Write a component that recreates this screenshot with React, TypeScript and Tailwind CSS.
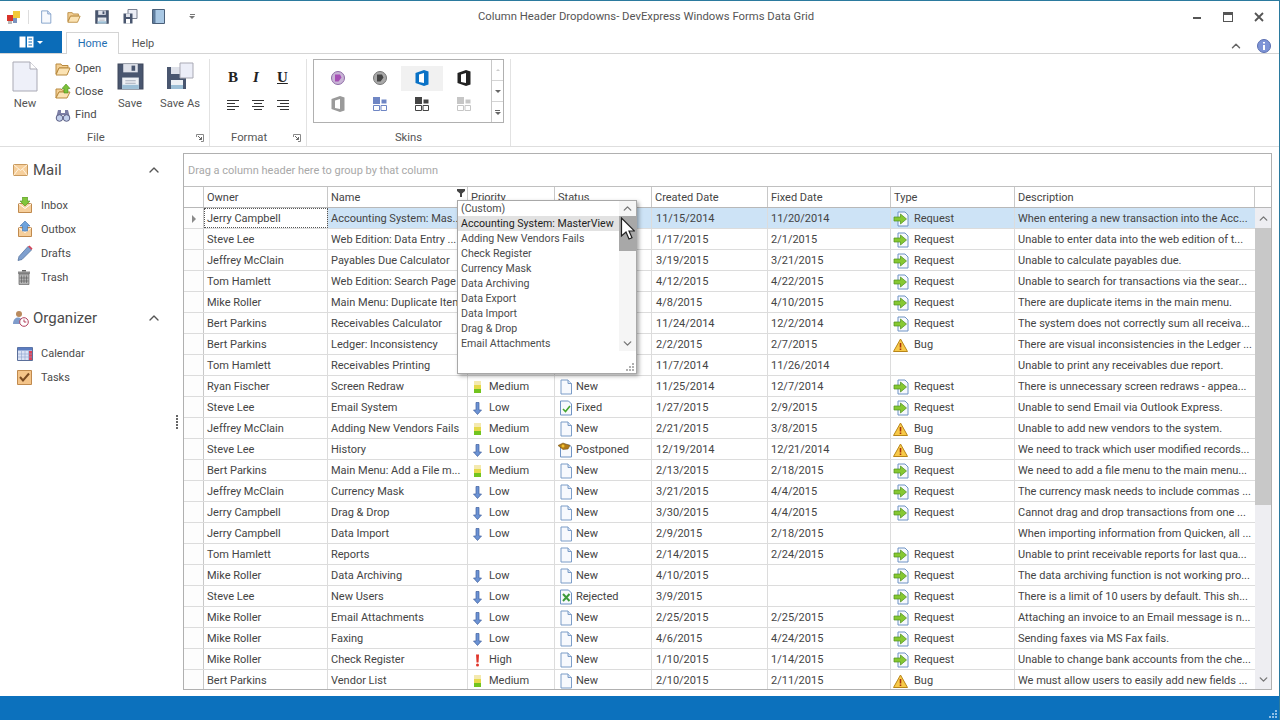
import React from 'react';
import { ChevronUp, ChevronDown } from 'lucide-react';

type Ic = { s?: number };

const Doc = ({ s = 16 }: Ic) => (
  <svg width={s} height={s} viewBox="0 0 16 16"><path d="M3 1h7l3.500 3.500V15H3z" fill="#f7f9fd" stroke="#7b9cc7" /><path d="M10 1v3.500h3.500" fill="#dbe6f5" stroke="#7b9cc7" /></svg>
);
const BigDoc = () => (
  <svg width="26" height="31" viewBox="0 0 26 31"><path d="M1 1h17l7 7v22H1z" fill="#eef0f9" stroke="#a9a9b4" /><path d="M18 1v7h7" fill="#fff" stroke="#a9a9b4" /></svg>
);
const Folder = () => (
  <svg width="16" height="14" viewBox="0 0 16 14"><path d="M1 12V2h5l1 1.500h6V6H4z" fill="#f3cf94" stroke="#b98a3e" /><path d="M1 13l3-7h11l-3 7z" fill="#fbe3b4" stroke="#b98a3e" /></svg>
);
const FolderUp = () => (
  <svg width="16" height="15" viewBox="0 0 16 15"><path d="M1 14V5h5l1 1h2v2H4z" fill="#f3cf94" stroke="#b98a3e" /><path d="M1 14l3-6h11l-3 6z" fill="#fbe3b4" stroke="#b98a3e" /><path d="M11 0l4 4.500h-2V9H9V4.500H7z" fill="#7cc13a" stroke="#4f8f1c" strokeWidth=".6" /></svg>
);
const Binoculars = () => (
  <svg width="16" height="14" viewBox="0 0 16 14"><path d="M3 2h3v3h4V2h3l2 8H9V7H7v3H1z" fill="#7d7fa6" /><circle cx="4.500" cy="10" r="3.300" fill="#c3d0ec" stroke="#5c5f84" /><circle cx="11.500" cy="10" r="3.300" fill="#c3d0ec" stroke="#5c5f84" /></svg>
);
const Floppy = ({ s = 16 }: Ic) => (
  <svg width={s} height={s} viewBox="0 0 26 26"><path d="M1 1h24v24H1z" fill="#49566f" stroke="#3b4559" /><path d="M6 1h14v8H6z" fill="#dfe2ea" /><path d="M14 2.500h3.500v5H14z" fill="#49566f" /><path d="M5 14h16v11H5z" fill="#eef1f5" /><path d="M5 21h16v4H5z" fill="#9dbfd6" /><path d="M8 17h10M8 19.500h10" stroke="#a7adba" /></svg>
);
const SaveAsIcon = () => (
  <svg width="28" height="28" viewBox="0 0 28 28"><path d="M1 5h19v22H1z" fill="#49566f" /><path d="M5 5h10v7H5z" fill="#dfe2ea" /><path d="M5 18h12v9H5z" fill="#eef1f5" /><path d="M5 23h12v4H5z" fill="#9dbfd6" /><path d="M14 1h13v15H14z" fill="#eceef8" stroke="#a9a9b4" /></svg>
);
const Logo = () => (
  <svg width="14" height="14" viewBox="0 0 14 14"><path d="M0 5h6v6H0z" fill="#d8332a" /><path d="M6 1h7v7H6z" fill="#f1c93b" /><path d="M6 8h4v5H6z" fill="#7b93bd" /><path d="M1 11h4v3H1z" fill="#b9b9b9" /></svg>
);
const Book = () => (
  <svg width="13" height="15" viewBox="0 0 13 15"><path d="M.5.500h12v14H.5z" fill="#a9c8e4" stroke="#4a5f78" /><path d="M1 1h2.500v13H1z" fill="#5e7d9e" /></svg>
);
const SmallDocBack = () => (
  <svg width="15" height="15" viewBox="0 0 15 15"><path d="M5 .5h9v9H5z" fill="#eceef6" stroke="#7a8090" /><path d="M.5 4.500h9v10h-9z" fill="#49566f" /><path d="M3 10h4v4.500H3z" fill="#fff" /><path d="M3 4.500h4V8H3z" fill="#dfe2ea" /></svg>
);

const Align = ({ rows }: { rows: string[] }) => (
  <svg width="12" height="10" viewBox="0 0 12 10">{rows.map((d, i) => <path key={i} d={d} stroke="#333" />)}</svg>
);

const SkinCircle = ({ c }: { c: string }) => (
  <svg width="16" height="16" viewBox="0 0 16 16"><circle cx="8" cy="8" r="6.500" fill={c === 'p' ? '#c9b5d6' : '#a8a8a8'} stroke={c === 'p' ? '#8e6da6' : '#777'} /><path d="M5 4.500h5l1.500 3-3 4H5z" fill={c === 'p' ? '#a64fb5' : '#444'} /></svg>
);
const Office = ({ c }: { c: string }) => (
  <svg width="16" height="18" viewBox="0 0 16 18"><path d="M1.500 4L10 1l4.500 1.500v13L10 17l-8.500-3z" fill={c} /><path d="M5 5.500l5-1.500v10l-5-1z" fill="#fff" /></svg>
);
const Tiles = ({ a, b }: { a: string; b: string }) => (
  <svg width="14" height="14" viewBox="0 0 14 14"><path d="M0 0h7v7H0z" fill={a} /><path d="M8.500 2.500h5v4h-5z" fill={b} /><path d="M.5 8.500h6v5h-6z" fill="none" stroke={a} /><path d="M8 8.500h5.500v5H8z" fill="none" stroke={a} /></svg>
);

const MailIcon = () => (
  <svg width="15" height="12" viewBox="0 0 15 12"><path d="M.5.500h14v11H.5z" fill="#f6cf9c" stroke="#c99a5e" /><path d="M.5.500l7 6 7-6M.5 11.500l5-6.500M14.500 11.500l-5-6.500" fill="none" stroke="#fff4e0" /></svg>
);
const Inbox = () => (
  <svg width="16" height="16" viewBox="0 0 16 16"><path d="M1.500 6.500h13v9h-13z" fill="#f6cf9c" stroke="#c08a4e" /><path d="M1.500 6.500l6.500 5 6.500-5" fill="none" stroke="#fff" /><path d="M5.500 0h5v4H13l-5 5-5-5h2.500z" fill="#82c63c" stroke="#4f8f1c" strokeWidth=".6" /></svg>
);
const Outbox = () => (
  <svg width="16" height="16" viewBox="0 0 16 16"><path d="M1.500 6.500h13v9h-13z" fill="#f6cf9c" stroke="#c08a4e" /><path d="M1.500 6.500l6.500 5 6.500-5" fill="none" stroke="#fff" /><path d="M8 0l5 5h-2.500v5h-5V5H3z" fill="#6ea3dc" stroke="#3f6fa8" strokeWidth=".6" /></svg>
);
const Pencil = () => (
  <svg width="16" height="16" viewBox="0 0 16 16"><path d="M11 1.500l3.500 3.500L5 14.500 1 15.500 2 11.500z" fill="#7fa0cf" stroke="#4d6b98" strokeWidth=".7" /><path d="M11 1.500l1.500-1 3 3-1 1.500z" fill="#d2455a" /></svg>
);
const Trash = () => (
  <svg width="14" height="16" viewBox="0 0 14 16"><path d="M1 2.500h12V5H1z" fill="#8b8b8b" /><path d="M5 1h4v1.500H5z" fill="#666" /><path d="M2 5h10v10.500H2z" fill="#b4b4b4" stroke="#666" strokeWidth=".7" /><path d="M4.500 6.500v7.500M7 6.500v7.500M9.500 6.500v7.500M2.500 9h9M2.500 12h9" stroke="#555" strokeWidth=".6" /></svg>
);
const OrganizerIcon = () => (
  <svg width="16" height="17" viewBox="0 0 16 17"><circle cx="6" cy="4" r="3" fill="#b98a5e" /><path d="M0 14c0-5 3-6.500 5-6.500S10 9 10 14z" fill="#7f9ccb" /><circle cx="11" cy="12" r="4.300" fill="#fff" stroke="#b3405d" /><path d="M11 9.500V12h2.300" fill="none" stroke="#b3405d" /></svg>
);
const Calendar = () => (
  <svg width="16" height="15" viewBox="0 0 16 15"><path d="M.5 1.500h15v13H.5z" fill="#dbe3f5" stroke="#5b6f9a" /><path d="M1 1.500h14v3H1z" fill="#5b7cc0" /><path d="M12 5h3v9h-3z" fill="#d9435a" /><path d="M4.500 5v9M8 5v9M11.500 5v9M1 8h14M1 11h14" stroke="#8ea3cc" strokeWidth=".6" /></svg>
);
const Tasks = () => (
  <svg width="15" height="15" viewBox="0 0 15 15"><path d="M.5.500h14v14H.5z" fill="#f4c489" stroke="#c08a4e" /><path d="M3 7l3 3.500L12 3.500" fill="none" stroke="#7a4a20" strokeWidth="2" /></svg>
);

const PrioMedium = () => (
  <svg width="7" height="12" viewBox="0 0 7 12"><path d="M0 0h7v4H0z" fill="#f4e9b0" /><path d="M0 4h7v4H0z" fill="#e6d94a" /><path d="M0 8h7v4H0z" fill="#72c41f" /></svg>
);
const PrioLow = () => (
  <svg width="9" height="13" viewBox="0 0 9 13"><path d="M3 .500h3V8h2.500L4.500 12.500.5 8H3z" fill="#6c93d4" stroke="#3f5f9e" strokeWidth=".7" /></svg>
);
const PrioHigh = () => (
  <svg width="7" height="13" viewBox="0 0 7 13"><path d="M2 .500h3l-.5 8h-2z" fill="#e0352b" /><circle cx="3.500" cy="11" r="1.500" fill="#e0352b" /></svg>
);
const StatusFixed = () => (
  <svg width="16" height="16" viewBox="0 0 16 16"><path d="M2.500 1h8l3 3v11h-11z" fill="#f7f9fd" stroke="#6f93c4" /><path d="M5 9l2.500 2.500L12 6" fill="none" stroke="#43a52c" strokeWidth="1.600" /></svg>
);
const StatusRejected = () => (
  <svg width="16" height="16" viewBox="0 0 16 16"><path d="M2.500 1h8l3 3v11h-11z" fill="#f7f9fd" stroke="#6f93c4" /><path d="M5 5l6.500 7M11.500 5L5 12" fill="none" stroke="#3c9a3a" strokeWidth="2" /></svg>
);
const StatusPostponed = () => (
  <svg width="16" height="16" viewBox="0 0 16 16"><path d="M2.500 3h9l2 2v10h-11z" fill="#f7f9fd" stroke="#6f93c4" /><path d="M0 3.500L5 1l7 2.500-2 3.500-5 .5z" fill="#b07a18" stroke="#6d4a0c" strokeWidth=".5" /><circle cx="5" cy="4" r="1.500" fill="#f2c230" /></svg>
);
const TypeRequest = () => (
  <svg width="17" height="16" viewBox="0 0 17 16"><path d="M5 1h7l3 3v11H5z" fill="#f7f9fd" stroke="#6f93c4" /><path d="M1 6h6.500V3l6 5-6 5v-3H1z" fill="#86c832" stroke="#4f8f1c" strokeWidth=".7" /></svg>
);
const TypeBug = () => (
  <svg width="15" height="14" viewBox="0 0 15 14"><path d="M7.500 1L14.500 13.500H.5z" fill="#f7c948" stroke="#b8861a" /><path d="M7.500 5v4.500M7.500 10.500v1.500" stroke="#a8320f" strokeWidth="1.600" /></svg>
);

const prio: Record<string, React.ReactNode> = { Medium: <PrioMedium />, Low: <PrioLow />, High: <PrioHigh /> };
const status: Record<string, React.ReactNode> = {
  New: <Doc />, Fixed: <StatusFixed />, Postponed: <StatusPostponed />, Rejected: <StatusRejected />,
};
const types: Record<string, React.ReactNode> = { Request: <TypeRequest />, Bug: <TypeBug /> };

// priority and status of the first eight rows sit behind the filter dropdown
const rows = [
  ['Jerry Campbell', 'Accounting System: Mas...', '', '', '11/15/2014', '11/20/2014', 'Request', 'When entering a new transaction into the Acc...'],
  ['Steve Lee', 'Web Edition: Data Entry ...', '', '', '1/17/2015', '2/1/2015', 'Request', 'Unable to enter data into the web edition of t...'],
  ['Jeffrey McClain', 'Payables Due Calculator', '', '', '3/19/2015', '3/21/2015', 'Request', 'Unable to calculate payables due.'],
  ['Tom Hamlett', 'Web Edition: Search Page', '', '', '4/12/2015', '4/22/2015', 'Request', 'Unable to search for transactions via the sear...'],
  ['Mike Roller', 'Main Menu: Duplicate Items', '', '', '4/8/2015', '4/10/2015', 'Request', 'There are duplicate items in the main menu.'],
  ['Bert Parkins', 'Receivables Calculator', '', '', '11/24/2014', '12/2/2014', 'Request', 'The system does not correctly sum all receiva...'],
  ['Bert Parkins', 'Ledger: Inconsistency', '', '', '2/2/2015', '2/7/2015', 'Bug', 'There are visual inconsistencies in the Ledger ...'],
  ['Tom Hamlett', 'Receivables Printing', '', '', '11/7/2014', '11/26/2014', '', 'Unable to print any receivables due report.'],
  ['Ryan Fischer', 'Screen Redraw', 'Medium', 'New', '11/25/2014', '12/7/2014', 'Request', 'There is unnecessary screen redraws - appea...'],
  ['Steve Lee', 'Email System', 'Low', 'Fixed', '1/27/2015', '2/9/2015', 'Request', 'Unable to send Email via Outlook Express.'],
  ['Jeffrey McClain', 'Adding New Vendors Fails', 'Medium', 'New', '2/21/2015', '3/8/2015', 'Bug', 'Unable to add new vendors to the system.'],
  ['Steve Lee', 'History', 'Low', 'Postponed', '12/19/2014', '12/21/2014', 'Bug', 'We need to track which user modified records...'],
  ['Bert Parkins', 'Main Menu: Add a File m...', 'Medium', 'New', '2/13/2015', '2/18/2015', 'Request', 'We need to add a file menu to the main menu...'],
  ['Jeffrey McClain', 'Currency Mask', 'Low', 'New', '3/21/2015', '4/4/2015', 'Request', 'The currency mask needs to include commas ...'],
  ['Jerry Campbell', 'Drag & Drop', 'Low', 'New', '3/30/2015', '4/4/2015', 'Request', 'Cannot drag and drop transactions from one ...'],
  ['Jerry Campbell', 'Data Import', 'Low', 'New', '2/9/2015', '2/18/2015', '', 'When importing information from Quicken, all ...'],
  ['Tom Hamlett', 'Reports', '', 'New', '2/14/2015', '2/24/2015', 'Request', 'Unable to print receivable reports for last qua...'],
  ['Mike Roller', 'Data Archiving', 'Low', 'New', '4/10/2015', '', 'Request', 'The data archiving function is not working pro...'],
  ['Steve Lee', 'New Users', 'Low', 'Rejected', '3/9/2015', '', 'Request', 'There is a limit of 10 users by default. This sh...'],
  ['Mike Roller', 'Email Attachments', 'Low', 'New', '2/25/2015', '2/25/2015', 'Request', 'Attaching an invoice to an Email message is n...'],
  ['Mike Roller', 'Faxing', 'Low', 'New', '4/6/2015', '4/24/2015', 'Request', 'Sending faxes via MS Fax fails.'],
  ['Mike Roller', 'Check Register', 'High', 'New', '1/10/2015', '1/14/2015', 'Request', 'Unable to change bank accounts from the che...'],
  ['Bert Parkins', 'Vendor List', 'Medium', 'New', '2/10/2015', '2/11/2015', 'Bug', 'We must allow users to easily add new fields ...'],
];

const columns = [
  { title: 'Owner', w: 'w-[124px]' },
  { title: 'Name', w: 'w-[140px]' },
  { title: 'Priority', w: 'w-[87px]' },
  { title: 'Status', w: 'w-[97px]' },
  { title: 'Created Date', w: 'w-[116px]' },
  { title: 'Fixed Date', w: 'w-[123px]' },
  { title: 'Type', w: 'w-[124px]' },
  { title: 'Description', w: 'w-[240px]' },
];

const popupItems = ['(Custom)', 'Accounting System: MasterView', 'Adding New Vendors Fails', 'Check Register', 'Currency Mask', 'Data Archiving', 'Data Export', 'Data Import', 'Drag & Drop', 'Email Attachments'];

function Launcher() {
  return (
    <svg className="ml-auto" width="8" height="8" viewBox="0 0 8 8"><path d="M.5 3V.5H7.500V7.500H5" fill="none" stroke="#888" /><path d="M2 2l3.500 3.500M5.500 3v2.500H3" fill="none" stroke="#666" /></svg>
  );
}

function NavGroup({ icon, title, items }: { icon: React.ReactNode; title: string; items: [React.ReactNode, string][] }) {
  return (
    <div className="mb-[17px]">
      <div className="flex h-[24px] items-center pl-[13px] pr-[21px]">
        <span className="flex w-[20px] shrink-0">{icon}</span>
        <span className="text-[15px] text-[#4b4b4b]">{title}</span>
        <ChevronUp className="ml-auto w-4 h-4 text-[#555]" strokeWidth={2} />
      </div>
      <div className="mt-[11px] flex flex-col">
        {items.map(([ic, label]) => (
          <div key={label} className="flex h-[24px] items-center pl-[17px] text-[#4b4b4b]">
            <span className="flex w-[24px] shrink-0">{ic}</span>
            <span className="pt-[2px]">{label}</span>
          </div>
        ))}
      </div>
    </div>
  );
}

function GridRow({ row, first }: { row: string[]; first: boolean }) {
  const [owner, name, p, s, created, fixed, t, desc] = row;
  return (
    <div className={`flex h-[21px] border-b border-[#dcdcdc] ${first ? 'bg-[#cde3f6]' : 'bg-white'}`}>
      <div className="flex w-[20px] shrink-0 items-center justify-center border-r border-[#c8c8c8] bg-[#fdfdfd] pt-[2px]">
        {first && <div className="h-0 w-0 border-y-[4px] border-l-[4px] border-y-transparent border-l-[#8a8a8a]" />}
      </div>
      <div className={`flex w-[124px] shrink-0 items-center border-r border-[#dcdcdc] pl-[3px] pt-[2px] ${first ? 'bg-white outline-1 -outline-offset-1 outline-dotted outline-[#555]' : ''}`}>{owner}</div>
      <div className="flex w-[140px] shrink-0 items-center overflow-hidden whitespace-nowrap border-r border-[#dcdcdc] pl-[3px] pt-[2px]">{name}</div>
      <div className="flex w-[87px] shrink-0 items-center border-r border-[#dcdcdc] pt-[2px]">
        {p && <span className="flex w-[19px] shrink-0 justify-center">{prio[p]}</span>}
        {p && <span className="pl-[2px]">{p}</span>}
      </div>
      <div className="flex w-[97px] shrink-0 items-center border-r border-[#dcdcdc] pl-[3px] pt-[2px]">
        {s && <span className="flex w-[18px] shrink-0">{status[s]}</span>}
        {s && <span>{s}</span>}
      </div>
      <div className="flex w-[116px] shrink-0 items-center border-r border-[#dcdcdc] pl-[4px] pt-[2px]">{created}</div>
      <div className="flex w-[123px] shrink-0 items-center border-r border-[#dcdcdc] pl-[3px] pt-[2px]">{fixed}</div>
      <div className="flex w-[124px] shrink-0 items-center border-r border-[#dcdcdc] pl-[2px] pt-[2px]">
        {t && <span className="flex w-[19px] shrink-0">{types[t]}</span>}
        {t && <span className="pl-[2px]">{t}</span>}
      </div>
      <div className="flex w-[240px] shrink-0 items-center overflow-hidden whitespace-nowrap pl-[3px] pt-[2px]">{desc}</div>
    </div>
  );
}

export default function App() {
  return (
    <div className="relative flex h-[720px] w-[1280px] flex-col overflow-hidden border-r border-[#2b7a9e] bg-white font-['Roboto',sans-serif] text-[11px] leading-[14px] text-[#444]">
      {/* title bar */}
      <div className="flex h-[32px] shrink-0 items-center border-t border-[#2b7a9e] pl-[7px]">
        <Logo />
        <div className="ml-[7px] h-[14px] w-px bg-[#ddd]" />
        <div className="ml-[10px] flex w-[14px]"><Doc /></div>
        <div className="ml-[14px] flex w-[14px]"><Folder /></div>
        <div className="ml-[14px] flex"><Floppy s={14} /></div>
        <div className="ml-[14px] flex"><SmallDocBack /></div>
        <div className="ml-[14px] flex"><Book /></div>
        <div className="ml-[24px] flex flex-col items-center gap-[1px]">
          <div className="h-px w-[5px] bg-[#777]" />
          <div className="h-0 w-0 border-x-[3px] border-t-[3px] border-x-transparent border-t-[#777]" />
        </div>
        <div className="ml-[283px] w-[320px] whitespace-nowrap text-center text-[11.300px] text-[#555]">Column Header Dropdowns- DevExpress Windows Forms Data Grid</div>
        <div className="ml-auto flex items-center pr-[15px]">
          <div className="mt-[3px] h-[2px] w-[8px] bg-[#555]" />
          <div className="ml-[22px] h-[10px] w-[10px] border border-t-[3px] border-[#555]" />
          <svg className="ml-[21px]" width="10" height="10" viewBox="0 0 10 10"><path d="M1 1l8 8M9 1l-8 8" stroke="#555" strokeWidth="1.800" /></svg>
        </div>
      </div>
      {/* tabs */}
      <div className="flex h-[22px] shrink-0 items-end border-b border-[#d4d4d4]">
        <div className="flex h-[22px] w-[62px] items-center justify-center gap-[3px] bg-[#0b6cb8]">
          <svg width="15" height="12" viewBox="0 0 15 12"><path d="M.5.500h6v11h-6z" fill="#fff" /><path d="M8 .500h6.500v11H8z" fill="#fff" /><path d="M9.500 3h3.500M9.500 6h3.500M9.500 9h3.500" stroke="#0b6cb8" /></svg>
          <div className="h-0 w-0 border-x-[3px] border-t-[3px] border-x-transparent border-t-white" />
        </div>
        <div className="relative -mb-px ml-[4px] flex h-[22px] w-[53px] items-center justify-center border-x border-t border-[#d4d4d4] bg-white text-[#1f6fb2]">Home</div>
        <div className="flex h-[21px] w-[48px] items-center justify-center pt-[2px] text-[#555]">Help</div>
        <div className="ml-auto flex items-center pr-[8px]">
          <ChevronUp className="h-[14px] w-[14px] text-[#666]" strokeWidth={2.500} />
          <svg className="ml-[14px]" width="14" height="14" viewBox="0 0 14 14"><circle cx="7" cy="7" r="6.500" fill="#7e94d6" stroke="#5b6fb0" /><path d="M7 3v1.500M7 6v5" stroke="#fff" strokeWidth="2" /></svg>
        </div>
      </div>
      {/* ribbon */}
      <div className="flex h-[93px] shrink-0 border-b border-[#dedede] pt-[5px] text-[11.300px] text-[#555]">
        <div className="flex w-[210px] shrink-0 flex-col border-r border-[#e2e2e2]">
          <div className="flex h-[72px]">
            <div className="ml-[12px] flex w-[26px] flex-col items-center">
              <div className="flex h-[34px] items-center"><BigDoc /></div>
              <span className="mt-[4px]">New</span>
            </div>
            <div className="ml-[17px] flex w-[62px] flex-col -mt-[2px] text-[#4b4b4b]">
              <div className="flex h-[23px] items-center gap-[4px]"><Folder /><span>Open</span></div>
              <div className="flex h-[23px] items-center gap-[4px]"><FolderUp /><span>Close</span></div>
              <div className="flex h-[23px] items-center gap-[4px]"><Binoculars /><span>Find</span></div>
            </div>
            <div className="flex w-[26px] flex-col items-center">
              <div className="flex h-[34px] items-center"><Floppy s={27} /></div>
              <span className="mt-[4px]">Save</span>
            </div>
            <div className="ml-[23px] flex w-[28px] flex-col items-center">
              <div className="flex h-[34px] items-center"><SaveAsIcon /></div>
              <span className="mt-[4px] whitespace-nowrap">Save As</span>
            </div>
          </div>
          <div className="flex h-[14px] items-center pl-[87px] pr-[5px]">
            <span>File</span>
            <Launcher />
          </div>
        </div>
        <div className="flex w-[97px] shrink-0 flex-col border-r border-[#e2e2e2]">
          <div className="flex h-[72px] flex-col pt-[9px]">
            <div className="flex h-[18px] items-center pl-[18px] font-['Liberation_Serif',serif] text-[15px] text-[#222]">
              <span className="w-[25px] font-bold">B</span>
              <span className="w-[24px] font-bold italic">I</span>
              <span className="font-bold underline">U</span>
            </div>
            <div className="mt-[14px] flex items-center pl-[17px]">
              <span className="flex w-[25px]"><Align rows={['M0 .500h12', 'M0 3.500h8', 'M0 6.500h12', 'M0 9.500h8']} /></span>
              <span className="flex w-[25px]"><Align rows={['M0 .500h12', 'M2 3.500h8', 'M0 6.500h12', 'M2 9.500h8']} /></span>
              <Align rows={['M0 .500h12', 'M3 3.500h9', 'M0 6.500h12', 'M3 9.500h9']} />
            </div>
          </div>
          <div className="flex h-[14px] items-center pl-[21px] pr-[5px]">
            <span>Format</span>
            <Launcher />
          </div>
        </div>
        <div className="flex w-[204px] shrink-0 flex-col border-r border-[#e2e2e2] px-[6px]">
          <div className="flex h-[64px] w-[191px] border border-[#b0b0b0]">
            <div className="grid flex-1 grid-cols-[repeat(4,42px)] grid-rows-[26px_26px] place-items-center content-start pl-[3px] pt-[5px]">
              <SkinCircle c="p" />
              <SkinCircle c="g" />
              <div className="flex h-[25px] w-[42px] items-center justify-center bg-[#f1f1f1]"><Office c="#0a72c6" /></div>
              <Office c="#222" />
              <Office c="#9a9a9a" />
              <Tiles a="#6f86c4" b="#6f86c4" />
              <Tiles a="#444" b="#444" />
              <Tiles a="#c6c6c6" b="#c6c6c6" />
            </div>
            <div className="flex w-[12px] flex-col border-l border-[#c8c8c8] text-[#666]">
              <div className="flex flex-1 items-center justify-center border-b border-[#d4d4d4]"><div className="h-0 w-0 border-x-[2px] border-b-[2px] border-x-transparent border-b-[#ccc]" /></div>
              <div className="flex flex-1 items-center justify-center border-b border-[#d4d4d4]"><div className="h-0 w-0 border-x-[3px] border-t-[3px] border-x-transparent border-t-[#666]" /></div>
              <div className="flex flex-1 flex-col items-center justify-center gap-[1px]"><div className="h-px w-[5px] bg-[#666]" /><div className="h-0 w-0 border-x-[3px] border-t-[3px] border-x-transparent border-t-[#666]" /></div>
            </div>
          </div>
          <div className="mt-[8px] text-center">Skins</div>
        </div>
      </div>
      {/* body */}
      <div className="flex min-h-0 flex-1">
        <div className="relative w-[183px] shrink-0 pt-[11px]">
          <NavGroup icon={<MailIcon />} title="Mail" items={[[<Inbox />, 'Inbox'], [<Outbox />, 'Outbox'], [<Pencil />, 'Drafts'], [<Trash />, 'Trash']]} />
          <NavGroup icon={<OrganizerIcon />} title="Organizer" items={[[<Calendar />, 'Calendar'], [<Tasks />, 'Tasks']]} />
          <div className="absolute left-[176px] top-[268px] flex flex-col gap-[1px]">
            {[0, 1, 2, 3, 4].map((i) => <div key={i} className="h-[2px] w-[2px] bg-[#666]" />)}
          </div>
        </div>
        <div className="mt-[6px] mb-[6px] flex h-[537px] w-[1089px] shrink-0 flex-col overflow-hidden border border-[#b0b0b0]">
          <div className="flex h-[33px] shrink-0 items-center border-b border-[#c0c0c0] pl-[4px] pt-[2px] text-[#a8a8a8]">Drag a column header here to group by that column</div>
          <div className="flex h-[21px] shrink-0 border-b border-[#b8b8b8]">
            <div className="w-[20px] shrink-0 border-r border-[#c8c8c8]" />
            {columns.map((c) => (
              <div key={c.title} className={`flex ${c.w} shrink-0 items-center border-r border-[#c8c8c8] pl-[3px] pt-[2px]`}>{c.title}</div>
            ))}
          </div>
          <div className="flex min-h-0 flex-1">
            <div className="w-[1071px] shrink-0 overflow-hidden">
              {rows.map((r, i) => <GridRow key={i} row={r} first={i === 0} />)}
            </div>
            <div className="flex w-[16px] shrink-0 flex-col bg-[#eeeef2]">
              <div className="flex h-[20px] shrink-0 items-center justify-center"><ChevronUp className="h-[13px] w-[13px] text-[#777]" strokeWidth={2.500} /></div>
              <div className="h-[277px] shrink-0 bg-[#c8c8c8]" />
              <div className="mt-auto flex h-[20px] shrink-0 items-center justify-center"><ChevronDown className="h-[13px] w-[13px] text-[#777]" strokeWidth={2.500} /></div>
            </div>
          </div>
        </div>
      </div>
      {/* status bar */}
      <div className="relative h-[24px] shrink-0 bg-[#0c71bd]">
        <div className="absolute bottom-[2px] right-[2px] grid grid-cols-3 gap-[1px]">
          {[0, 1, 2, 3, 4, 5, 6, 7, 8].map((i) => <div key={i} className={`h-[2px] w-[2px] ${[0, 1, 3].includes(i) ? 'bg-transparent' : 'bg-[#8fc0e6]'}`} />)}
        </div>
      </div>
      {/* filter dropdown over the grid */}
      <svg className="absolute left-[457px] top-[189px]" width="9" height="9" viewBox="0 0 9 9"><path d="M0 0h8v2L5 4.500V8H3V4.500L0 2z" fill="#444" /></svg>
      <div className="absolute left-[457px] top-[200px] flex h-[174px] w-[180px] border border-[#a8a8a8] bg-white text-[10.600px] shadow-[2px_2px_4px_rgba(0,0,0,0.35)]">
        <div className="min-w-0 flex-1">
          {popupItems.map((it, i) => (
            <div key={it} className={`flex h-[15px] items-center whitespace-nowrap pl-[3px] ${i === 1 ? 'bg-[#e2e2e2] text-[#222]' : 'text-[#4b4b4b]'}`}>{it}</div>
          ))}
        </div>
        <div className="flex h-[150px] w-[17px] shrink-0 flex-col bg-[#f5f5f5]">
          <div className="flex h-[15px] shrink-0 items-center justify-center"><ChevronUp className="h-[13px] w-[13px] text-[#777]" strokeWidth={2.500} /></div>
          <div className="h-[35px] shrink-0 bg-[#a8a8a8]" />
          <div className="mt-auto flex h-[15px] shrink-0 items-center justify-center"><ChevronDown className="h-[13px] w-[13px] text-[#777]" strokeWidth={2.500} /></div>
        </div>
        <div className="absolute bottom-[2px] right-[2px] grid grid-cols-3 gap-[1px]">
          {[0, 1, 2, 3, 4, 5, 6, 7, 8].map((i) => <div key={i} className={`h-[2px] w-[2px] ${[0, 1, 3].includes(i) ? 'bg-transparent' : 'bg-[#b0b0b0]'}`} />)}
        </div>
      </div>
      {/* mouse cursor */}
      <svg className="absolute left-[620px] top-[217px]" width="15" height="24" viewBox="0 0 15 24"><path d="M1.500 1v18l4.500-4 3 7 3-1.300-3-6.700h5.500z" fill="#fff" stroke="#222" strokeWidth="1.200" /></svg>
    </div>
  );
}
